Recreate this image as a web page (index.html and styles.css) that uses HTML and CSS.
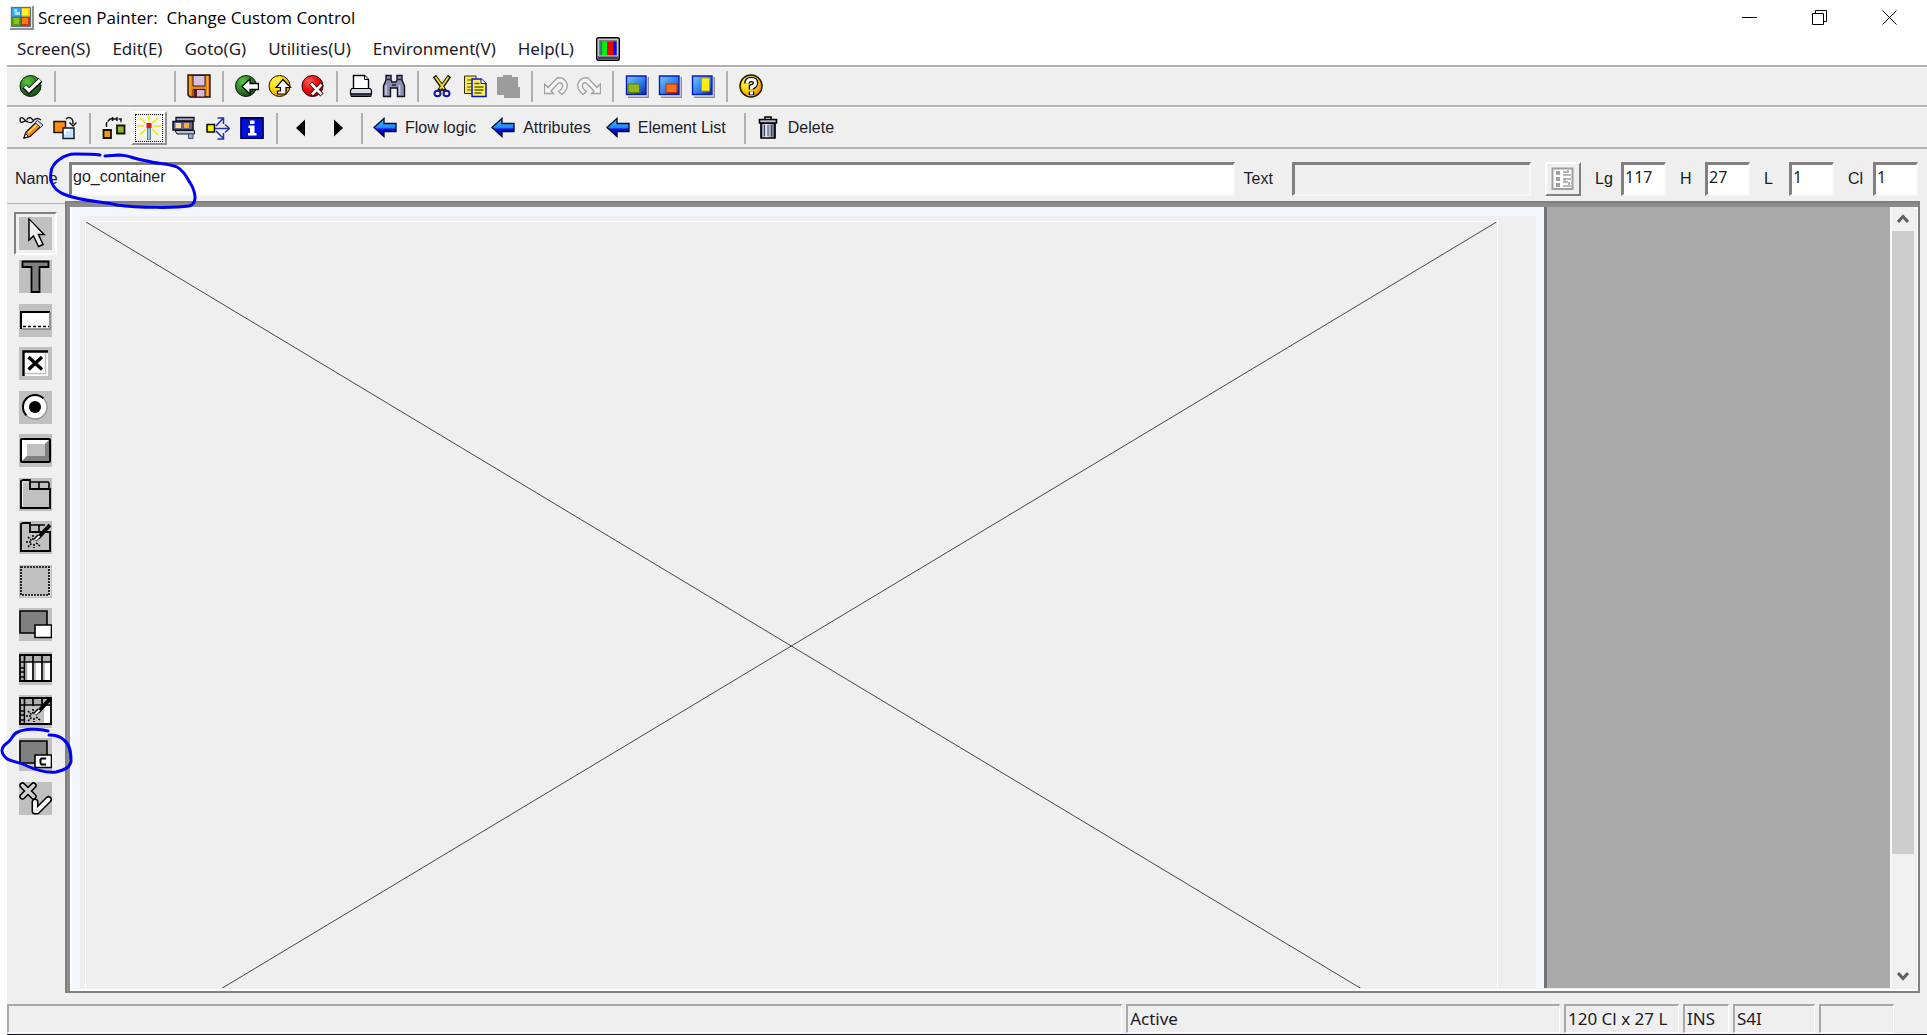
FILE: index.html
```html
<!DOCTYPE html>
<html lang="en">
<head>
  <meta charset="UTF-8">
  <meta name="viewport" content="width=device-width, initial-scale=1.0">
  <title>Screen Painter: Change Custom Control</title>
  <link rel="stylesheet" href="styles.css">
</head>
<body>
  <!-- shared gradients and shapes -->
  <svg class="defs" aria-hidden="true">
    <defs>
      <radialGradient id="gGreen" cx="0.35" cy="0.3" r="0.8"><stop offset="0" stop-color="#5cc83c"/><stop offset="0.5" stop-color="#2c8428"/><stop offset="1" stop-color="#0c4010"/></radialGradient>
      <radialGradient id="gYellow" cx="0.35" cy="0.3" r="0.8"><stop offset="0" stop-color="#fff860"/><stop offset="0.5" stop-color="#fcd800"/><stop offset="1" stop-color="#e87800"/></radialGradient>
      <radialGradient id="gRed" cx="0.35" cy="0.3" r="0.8"><stop offset="0" stop-color="#ff6050"/><stop offset="0.5" stop-color="#ec0c10"/><stop offset="1" stop-color="#8c0008"/></radialGradient>
      <linearGradient id="gBlue" x2="1" y2="1"><stop offset="0" stop-color="#78c8ff"/><stop offset="0.6" stop-color="#2878e8"/><stop offset="1" stop-color="#102878"/></linearGradient>
      <linearGradient id="gArrow" x2="0" y2="1"><stop offset="0" stop-color="#40c8ff"/><stop offset="0.5" stop-color="#2088ff"/><stop offset="0.6" stop-color="#0010e0"/><stop offset="1" stop-color="#0000a0"/></linearGradient>
      <linearGradient id="gCan" x2="1"><stop offset="0" stop-color="#707890"/><stop offset="0.4" stop-color="#e8ecf4"/><stop offset="1" stop-color="#505870"/></linearGradient>
      <symbol id="arrow" viewBox="0 0 24 24"><path d="M1 11.500 11 2.500V7.500H23V15.500H11V20.500Z" fill="url(#gArrow)"/><path d="M1 11.500 11 2.500V7.500H23V15.500H11V20.500Z" fill="none" stroke="#000830" stroke-width="1.300"/></symbol>
      <symbol id="wand" viewBox="0 0 33 33"><path d="M31 4 19 17" stroke="#000" stroke-width="4"/><path d="M20 15 16 19" stroke="#000" stroke-width="4"/><path d="M20.500 15 16.500 19" stroke="#fff" stroke-width="2"/><path d="M14 14v5M9 16l4 4M7 21h5M9 26l4-4M15 23v4M17 22l4 3" stroke="#000" stroke-width="1.500" stroke-dasharray="2 1" fill="none"/></symbol>
    </defs>
  </svg>

  <header class="titlebar">
    <svg class="app-icon" viewBox="0 0 24 24">
      <path d="M0 0H24V24H0Z" fill="#909090"/><path d="M0 0H22V22H0Z" fill="#e4e4e4"/>
      <path d="M2 2H11V11H2Z" fill="#38a8f8"/><path d="M4 3h3v3h3v3H5Z" fill="#a8e0ff"/>
      <path d="M11 2H20V11H11Z" fill="#f8d000"/><path d="M12 3h6v6h-6Z" fill="#fff030"/>
      <path d="M2 11H11V20H2Z" fill="#50a010"/><path d="M4 12h5v6H4Z" fill="#88c420"/>
      <path d="M11 11H20V20H11Z" fill="#d03800"/><path d="M12 12h6v6h-6Z" fill="#ff7810"/>
      <path d="M1.500 1.500H20.500V20.500H1.500ZM11 2V20M2 11H20" fill="none" stroke="#405068" stroke-width=".8"/>
    </svg>
    <h1>Screen Painter:&nbsp; Change Custom Control</h1>
    <div class="window-buttons">
      <button type="button" aria-label="Minimize"><svg viewBox="0 0 16 16"><path d="M0 7.500H15" class="thin"/></svg></button>
      <button type="button" aria-label="Restore"><svg viewBox="0 0 16 16"><path d="M.5 3.500H11.500V14.500H.5ZM3.500 3.500V.5H14.500V11.500H11.500" class="thin"/></svg></button>
      <button type="button" aria-label="Close"><svg viewBox="0 0 16 16"><path d="M.5.5 14.500 14.500M14.500.5.5 14.500" class="thin"/></svg></button>
    </div>
  </header>

  <div class="window">
    <nav class="menubar">
      <button type="button">Screen(S)</button>
      <button type="button">Edit(E)</button>
      <button type="button">Goto(G)</button>
      <button type="button">Utilities(U)</button>
      <button type="button">Environment(V)</button>
      <button type="button">Help(L)</button>
      <button type="button" aria-label="Layout">
        <svg class="icon" viewBox="0 0 24 24"><rect x=".7" y=".7" width="22.600" height="22.600" rx="1.500" fill="#c8c8d0" stroke="#000" stroke-width="1.400"/><path d="M1.500 19.500H22.500V22H1.500Z" fill="#404058"/><path d="M3 3H21V18.500H3Z" fill="#807c80"/><path d="M4.500 4.500H6V18H4.500Z" fill="#008080"/><path d="M6 4.500h5V18H6Z" fill="#00f000"/><path d="M11 4.500h6V18h-6Z" fill="#f80000"/><path d="M17 4.500h3.500V18H17Z" fill="#0000f8"/></svg>
      </button>
    </nav>

    <div class="toolbar">
      <button type="button" aria-label="Enter"><svg class="icon" viewBox="0 0 24 24"><circle cx="11.500" cy="12" r="10.500" fill="url(#gGreen)" stroke="#102010"/><path d="M5.500 12.500 10 17 21.500 6" fill="none" stroke="#000" stroke-width="5.500"/><path d="M6 12.500 10 16.500 21 6" fill="none" stroke="#fff" stroke-width="3.200"/></svg></button>
      <span class="sep"></span>
      <input class="command" type="text" aria-label="Command">
      <span class="sep"></span>
      <button type="button" aria-label="Save"><svg class="icon" viewBox="0 0 24 24"><path d="M1 1H23V23H3L1 21Z" fill="#e88810" stroke="#201008" stroke-width="1.400"/><path d="M3 2v18M20.500 2v20" stroke="#ffb040"/><path d="M6 1.500H18V12H6Z" fill="#d8c0e0" stroke="#301828"/><path d="M6 15.500H18V23H6Z" fill="#d0b8d8" stroke="#301010"/><path d="M7 16h3v7H7Z" fill="#601810"/></svg></button>
      <span class="sep"></span>
      <button type="button" aria-label="Back"><svg class="icon" viewBox="0 0 24 24"><circle cx="11" cy="12" r="10.500" fill="url(#gGreen)" stroke="#102010"/><path d="M7 12.500 15 5V9.500H23.500V15.500H15V20Z" fill="#fff" stroke="#000" stroke-width="1.300"/></svg></button>
      <button type="button" aria-label="Exit"><svg class="icon" viewBox="0 0 24 24"><circle cx="11.500" cy="12" r="10.500" fill="url(#gYellow)" stroke="#201800"/><path d="M15 5.500 22.500 13.500H18V20H9.500V17H12.500V13.500H8Z" fill="#fff" stroke="#000" stroke-width="1.200"/></svg></button>
      <button type="button" aria-label="Cancel"><svg class="icon" viewBox="0 0 24 24"><circle cx="11.500" cy="12" r="10.500" fill="url(#gRed)" stroke="#300"/><path d="M9.500 9 21 21M21 10 10.500 21" stroke="#400" stroke-width="4.500"/><path d="M10 9.500 20.500 20.500M20.500 10.500 11 20.500" stroke="#fff" stroke-width="2.600"/></svg></button>
      <span class="sep"></span>
      <button type="button" aria-label="Print"><svg class="icon" viewBox="0 0 24 24"><path d="M4.500 15V1.500H15.500L19.500 5.500V15Z" fill="#fff" stroke="#000" stroke-width="1.400"/><path d="M15.500 1.500V5.500H19.500" fill="#ddd" stroke="#000"/><path d="M3 14.500H21L22.500 16.500V20H1.500V16.500Z" fill="#d8dce8" stroke="#000" stroke-width="1.200"/><path d="M2 20H22V22.500H2Z" fill="#485068" stroke="#000"/></svg></button>
      <button type="button" aria-label="Find"><svg class="icon" viewBox="0 0 24 24"><path d="M1.500 22.500V12L4 6V1.500H9V6L10 8H14L15 6V1.500H20V6L22.500 12V22.500H15.500V14H8.500V22.500Z" fill="#8c90b0" stroke="#101020" stroke-width="1.400"/><path d="M4 11V21M17.500 11V21" stroke="#c8cce0" stroke-width="1.600"/><path d="M4.500 5.500H8.500M15.500 5.500H19.500M10 11H14" stroke="#202440" stroke-width="1.400"/></svg></button>
      <span class="sep"></span>
      <button type="button" aria-label="Cut"><svg class="icon" viewBox="0 0 24 24"><path d="M4.500 2 15 17M19.500 2 9 17" stroke="#181800" stroke-width="4"/><path d="M5.500 3 14 15M18.500 3 10 15" stroke="#f0e020" stroke-width="1.800"/><ellipse cx="7.500" cy="19.500" rx="3" ry="2.800" fill="none" stroke="#1818a0" stroke-width="2"/><ellipse cx="16.500" cy="19.500" rx="3" ry="2.800" fill="none" stroke="#1818a0" stroke-width="2"/></svg></button>
      <button type="button" aria-label="Copy"><svg class="icon" viewBox="0 0 24 24"><path d="M1.500 2H13V19.500H1.500Z" fill="#f4e860" stroke="#303010"/><path d="M4 6h7M4 9.500h5M4 13h4M4 16h4" stroke="#605800"/><path d="M9 5H18L23 9.500V22.500H9Z" fill="#f8f060" stroke="#1010c0" stroke-width="1.500"/><path d="M18 5V9.500H23" fill="#fff" stroke="#1010c0"/><path d="M11.500 9.500h5M11.500 13h9M11.500 16h9M11.500 19h7" stroke="#686000" stroke-width="1.300"/></svg></button>
      <button type="button" aria-label="Paste" disabled><svg class="icon" viewBox="0 0 24 24"><path d="M1 3H7V1H16V3H22V13H24V24H8V21H1Z" fill="#9c9c9c"/></svg></button>
      <span class="sep"></span>
      <button type="button" aria-label="Undo" disabled><svg class="icon" viewBox="0 0 24 24"><path d="M0.500 10V19.500H9.500L7 17 14 9.500Q17 7.500 18.500 10.500 19.500 14 14.500 17.500L18 20.500Q24.500 15 23 9.500 20 2.500 13 4L4 13.500Z" fill="#f4f4f4" stroke="#a0a0a0" stroke-width="1.300"/></svg></button>
      <button type="button" aria-label="Redo" disabled><svg class="icon" viewBox="0 0 24 24"><path d="M23.500 10V19.500H14.500L17 17 10 9.500Q7 7.500 5.500 10.500 4.500 14 9.500 17.500L6 20.500Q-.5 15 1 9.500 4 2.500 11 4L20 13.500Z" fill="#f4f4f4" stroke="#a0a0a0" stroke-width="1.300"/></svg></button>
      <span class="sep"></span>
      <button type="button" aria-label="Create session"><svg class="icon" viewBox="0 0 24 24"><path d="M3 3H24V24H3Z" fill="#909090"/><path d="M0 0H22.500V22.500H0Z" fill="#f4f4f4"/><path d="M1.500 2H21V20.500H1.500Z" fill="url(#gBlue)" stroke="#0818c0" stroke-width="1.400"/><path d="M3 10H14.500V18.500H3Z" fill="#90b818" stroke="#587808"/></svg></button>
      <button type="button" aria-label="Generate shortcut"><svg class="icon" viewBox="0 0 24 24"><path d="M3 3H24V24H3Z" fill="#909090"/><path d="M0 0H22.500V22.500H0Z" fill="#f4f4f4"/><path d="M1.500 2H21V20.500H1.500Z" fill="url(#gBlue)" stroke="#0818c0" stroke-width="1.400"/><path d="M8 10H19V18.500H8Z" fill="#ff7010" stroke="#a83000"/></svg></button>
      <button type="button" aria-label="Layout menu"><svg class="icon" viewBox="0 0 24 24"><path d="M3 3H24V24H3Z" fill="#909090"/><path d="M0 0H22.500V22.500H0Z" fill="#f4f4f4"/><path d="M1.500 2H21V20.500H1.500Z" fill="url(#gBlue)" stroke="#0818c0" stroke-width="1.400"/><path d="M10.500 4H18.500V17H10.500Z" fill="#ffec10" stroke="#c0a000"/></svg></button>
      <span class="sep"></span>
      <button type="button" aria-label="Help"><svg class="icon" viewBox="0 0 24 24"><circle cx="12" cy="12" r="11" fill="url(#gYellow)" stroke="#201800" stroke-width="1.500"/><path d="M8 9.500Q8 5.500 12 5.500 16.500 5.500 16.500 9 16.500 12 12.500 13V15.500M12.500 17.500V21" fill="none" stroke="#000" stroke-width="5.500"/><path d="M8 9.500Q8 5.500 12 5.500 16.500 5.500 16.500 9 16.500 12 12.500 13V15.500M12.500 17.500V20.500" fill="none" stroke="#fff" stroke-width="3"/></svg></button>
    </div>

    <div class="toolbar toolbar-app">
      <button type="button" aria-label="Display or change"><svg class="icon" viewBox="0 0 24 24"><path d="M1 4Q1 1 4 2L7 5M8 4Q8 1 12 2L15 5M1 4Q1 7 4 6 7 4 9 6 13 8 15 4Q18 1 22 4" fill="none" stroke="#101010" stroke-width="1.300"/><path d="M5 22 7 16 18 5.500 23 9.500 11 20.500Z" fill="#f88c10" stroke="#201000" stroke-width="1.300"/><path d="M9 17 19.500 7" stroke="#ffe060" stroke-width="1.500"/><path d="M16 6.500 21.500 11.500 24 9 18.500 4.500Z" fill="#c8d4e8" stroke="#203050"/><path d="M5 22 6.500 17.500 9.500 20.500Z" fill="#fff" stroke="#000"/></svg></button>
      <button type="button" aria-label="Other object"><svg class="icon" viewBox="0 0 24 24"><path d="M1 5.500H12.500V16.500H1Z" fill="#ff8c10" stroke="#201000" stroke-width="1.500"/><path d="M10 12H21V22.500H10Z" fill="#c8e0f8" stroke="#102030" stroke-width="1.500"/><path d="M12 18V14H17" stroke="#fff" fill="none" stroke-width="2"/><path d="M13 3Q16 0 19 3 20 4 20 8M16.500 6.500 20 10 23.500 6.500" fill="none" stroke="#181818" stroke-width="1.500"/></svg></button>
      <span class="sep"></span>
      <button type="button" aria-label="Check"><svg class="icon" viewBox="0 0 24 24"><path d="M1.500 14H9V22H1.500Z" fill="#f09810" stroke="#181000" stroke-width="1.800"/><path d="M15 9.500H22.500V17.500H15Z" fill="#90b830" stroke="#101800" stroke-width="1.800"/><path d="M4.500 11V7L8 3H19V7M10.500 1V5M15 1V5" fill="none" stroke="#101010" stroke-width="1.500" stroke-dasharray="5 1"/></svg></button>
      <button type="button" class="raised" aria-label="Activate"><svg class="icon" viewBox="0 0 24 24"><path d="M12 0V5M3 2 8.500 7M21 2 15.500 7M0 10H7M24 10H17M3 19 9 13M21 19 15 13" stroke="#f0e800" stroke-width="1.500"/><path d="M9.500 7H14.500V12H9.500Z" fill="#f01010"/><path d="M10.500 12H13.500V24H10.500Z" fill="#a0c8d8" stroke="#406878" stroke-width=".8"/></svg></button>
      <button type="button" aria-label="Test"><svg class="icon" viewBox="0 0 24 24"><path d="M4 1.500H22V5H4Z" fill="#a0a8c0" stroke="#101020" stroke-width="1.300"/><path d="M1 5.500H21V14H1Z" fill="#606880" stroke="#101020" stroke-width="1.500"/><path d="M3.500 7H9V12H3.500Z" fill="#ffd8a8"/><path d="M12 7H17V12H12Z" fill="#f8a840"/><path d="M3 14.500H22.500V18H5Z" fill="#b8c0d0" stroke="#101020"/><path d="M16.500 18H21V22.500H16.500Z" fill="#a0b0d0" stroke="#405070"/></svg></button>
      <button type="button" aria-label="Where-used list"><svg class="icon" viewBox="0 0 24 24"><path d="M1 8.500H8.500V16H1Z" fill="#f8f000" stroke="#000" stroke-width="1.500"/><path d="M9 12.500H23M19 8.500 23.500 12.500 19 16.500M10 10 17 2.500M11.500 2H17.500V8M10 15 17 22M11.500 23H17.500V17" fill="none" stroke="#2030b0" stroke-width="1.500"/></svg></button>
      <button type="button" aria-label="Information"><svg class="icon" viewBox="0 0 24 24"><path d="M1 2H23V22H1Z" fill="#0010d8" stroke="#000070" stroke-width="1.800"/><path d="M10 4.500H14.500V8H10ZM8.500 9.500H14.500V17H16.500V19.500H8V17H10V12H8.500Z" fill="#fff"/></svg></button>
      <span class="sep"></span>
      <button type="button" class="step" aria-label="Previous"><svg class="icon" viewBox="0 0 24 24"><path d="M6 12 15 3.500V20.500Z" fill="#000"/></svg></button>
      <button type="button" class="step" aria-label="Next"><svg class="icon" viewBox="0 0 24 24"><path d="M18 12 9 3.500V20.500Z" fill="#000"/></svg></button>
      <span class="sep"></span>
      <button type="button" class="labelled"><svg class="icon"><use href="#arrow"/></svg>Flow logic</button>
      <button type="button" class="labelled"><svg class="icon"><use href="#arrow"/></svg>Attributes</button>
      <button type="button" class="labelled"><svg class="icon"><use href="#arrow"/></svg>Element List</button>
      <span class="sep"></span>
      <button type="button" class="labelled"><svg class="icon" viewBox="0 0 24 24"><path d="M5 7H19V22H5Z" fill="url(#gCan)" stroke="#000" stroke-width="1.700"/><path d="M3.500 3.500H20.500V7H3.500Z" fill="#b8bcc8" stroke="#000" stroke-width="1.600"/><path d="M9 3V1H15V3" fill="none" stroke="#000" stroke-width="1.500"/><path d="M8.500 9V20M12 9V20M15.500 9V20" stroke="#404860"/></svg>Delete</button>
    </div>

    <form class="fields">
      <label for="name" class="name-label">Name</label>
      <input type="text" id="name" class="sunken name-input" value="go_container" spellcheck="false">
      <label for="text" class="text-label">Text</label>
      <input type="text" id="text" class="sunken text-input" disabled>
      <button type="button" class="attr-button" aria-label="Attributes list">
        <svg viewBox="0 0 24 24"><path d="M1.500 1.500H21.500V22H1.500Z" fill="#fff" stroke="#a0a0a0" stroke-width="2"/><path d="M5 4H9V8H5ZM5 10H9V14H5ZM5 16H9V20H5Z" fill="#a0a0a0"/><path d="M12 5h4M12 8h8M12 12h8M12 15h5M12 19h8M17 3v3M14 11v3M18 15v3" stroke="#a0a0a0" stroke-width="1.500"/></svg>
      </button>
      <div class="sizes">
        <label for="lg">Lg</label><input type="text" id="lg" class="sunken" value="117">
        <label for="h">H</label><input type="text" id="h" class="sunken" value="27">
        <label for="l">L</label><input type="text" id="l" class="sunken" value="1">
        <label for="cl">Cl</label><input type="text" id="cl" class="sunken" value="1">
      </div>
    </form>

    <main class="workspace">
      <aside class="palette">
        <button type="button" class="pressed" aria-label="Select"><svg viewBox="0 0 33 33"><path d="M10 2V23L14.500 19 19.500 29.500 24 27.500 19.500 17.500H25Z" fill="#eee" stroke="#000" stroke-width="1.500"/><path d="M11 4.500 22.500 16.500" stroke="#fff"/></svg></button>
        <button type="button" aria-label="Text field"><svg viewBox="0 0 33 33"><path d="M3.500 1.500H29.500V7H20.500V32H12.500V7H3.500Z" fill="#808080" stroke="#000" stroke-width="1.800"/></svg></button>
        <button type="button" aria-label="Input field"><svg viewBox="0 0 33 33"><path d="M2 8H31V25H2Z" fill="#fff"/><path d="M2 25V8H31" fill="none" stroke="#000" stroke-width="2"/><path d="M31 8V25H3" fill="none" stroke="#808080" stroke-width="1.500"/><path d="M4 22.500H30" stroke="#000" stroke-width="1.600" stroke-dasharray="3 2"/></svg></button>
        <button type="button" aria-label="Checkbox"><svg viewBox="0 0 33 33"><path d="M4 4H29V29H4Z" fill="#fff"/><path d="M4.500 29V4.500H29" fill="none" stroke="#000" stroke-width="2.400"/><path d="M26.500 6V26.500H6" fill="none" stroke="#c0c0c0" stroke-width="1.500"/><path d="M9.500 10 23 22.500M23 10 9.500 22.500" stroke="#000" stroke-width="3.400"/></svg></button>
        <button type="button" aria-label="Radio button"><svg viewBox="0 0 33 33"><circle cx="16" cy="16" r="12" fill="#fff"/><path d="M7.500 24.500A12 12 0 1 1 24.500 7.500" fill="none" stroke="#000" stroke-width="2"/><path d="M24.500 7.500A12 12 0 0 1 7.500 24.500" fill="none" stroke="#909090" stroke-width="1.300"/><circle cx="16" cy="16" r="6" fill="#000"/></svg></button>
        <button type="button" aria-label="Pushbutton"><svg viewBox="0 0 33 33"><rect x="2" y="5" width="29" height="23" rx="1" fill="#c0c0c0" stroke="#000" stroke-width="2"/><path d="M3 27V6H30L26 10H8V22Z" fill="#fff"/><path d="M3 27H30V6L26 10V22H8Z" fill="#808080"/></svg></button>
        <button type="button" aria-label="Tabstrip"><svg viewBox="0 0 33 33"><path d="M2 30V3L4 2H11V11H31V30Z" fill="#c0c0c0" stroke="#000" stroke-width="1.800"/><path d="M11 4H20V11M20 5L21 4H29L30 5V11" fill="none" stroke="#000" stroke-width="1.600"/><path d="M3.500 28V4H9" fill="none" stroke="#eee"/></svg></button>
        <button type="button" aria-label="Tabstrip wizard"><svg viewBox="0 0 33 33"><path d="M2 30V3L4 2H11V11H31V30Z" fill="#c0c0c0" stroke="#000" stroke-width="1.800"/><path d="M11 4H20V11M20 5L21 4H26" fill="none" stroke="#000" stroke-width="1.600"/><use href="#wand"/></svg></button>
        <button type="button" aria-label="Box"><svg viewBox="0 0 33 33"><path d="M3 3H31V31H3Z" fill="none" stroke="#eee"/><path d="M2 2H30V30H2Z" fill="#c0c0c0" stroke="#000" stroke-width="1.600" stroke-dasharray="2 1"/></svg></button>
        <button type="button" aria-label="Subscreen area"><svg viewBox="0 0 33 33"><path d="M1 3H28V25H1Z" fill="#808080" stroke="#000" stroke-width="1.600"/><path d="M16 17H32.500V29.500H16Z" fill="#fff" stroke="#000" stroke-width="1.600"/></svg></button>
        <button type="button" aria-label="Table control"><svg viewBox="0 0 33 33"><path d="M1 3H32V29H1Z" fill="#fff" stroke="#000" stroke-width="1.800"/><path d="M2 4H31V10H2ZM2 4H5V28H2Z" fill="#b0b0b0"/><path d="M1 10H32M5.500 3V29M14 3V29M23 3V29M1 16H5M1 20H5M1 25H5" stroke="#000" stroke-width="1.700"/><path d="M7.500 11V28M16 11V28M25 11V28" stroke="#a0a0a0" stroke-width="1.400"/></svg></button>
        <button type="button" aria-label="Table control wizard"><svg viewBox="0 0 33 33"><path d="M1 3H32V29H1Z" fill="#fff" stroke="#000" stroke-width="1.800"/><path d="M2 4H31V10H2ZM2 4H5V28H2Z" fill="#b0b0b0"/><path d="M1 10H32M5.500 3V29M14 3V29M23 3V29M1 16H5M1 20H5M1 25H5" stroke="#000" stroke-width="1.700"/><path d="M7 11H25V28H7Z" fill="#c0c0c0"/><use href="#wand"/></svg></button>
        <button type="button" aria-label="Custom control"><svg viewBox="0 0 33 33"><path d="M1 3H28V25H1Z" fill="#808080" stroke="#000" stroke-width="1.600"/><path d="M16 17H32.500V29.500H16Z" fill="#fff" stroke="#000" stroke-width="1.600"/><path d="M27 20.500H22.500L21.500 21.500V25L22.500 26.500H27" fill="none" stroke="#000" stroke-width="2"/></svg></button>
        <button type="button" aria-label="Status icon"><svg viewBox="0 0 33 33"><path d="M3.500 3.500 14.500 14.500M14.500 3.500 3.500 14.500" stroke="#000" stroke-width="6.500" stroke-linecap="round"/><path d="M3.500 3.500 14.500 14.500M14.500 3.500 3.500 14.500" stroke="#d0d0d0" stroke-width="3.500" stroke-linecap="round"/><path d="M16 20V29H18L29.500 17.500" fill="none" stroke="#000" stroke-width="7" stroke-linecap="round" stroke-linejoin="round"/><path d="M16 20V29H18L29.500 17.500" fill="none" stroke="#f4f4f4" stroke-width="4" stroke-linecap="round" stroke-linejoin="round"/></svg></button>
      </aside>

      <section class="editor">
        <div class="canvas">
          <div class="screen">
            <!-- custom control runs on below the visible area -->
            <div class="custom-control">
              <svg viewBox="0 0 100 100" preserveAspectRatio="none"><path d="M0 0 100 100M100 0 0 100"/></svg>
            </div>
          </div>
        </div>
        <div class="outside"></div>
        <div class="scrollbar">
          <button type="button" aria-label="Scroll up"><svg viewBox="0 0 12 10"><path d="M1 8 6 2.500 11 8"/></svg></button>
          <div class="track"><div class="thumb"></div></div>
          <button type="button" aria-label="Scroll down"><svg viewBox="0 0 12 10"><path d="M1 2 6 7.500 11 2"/></svg></button>
        </div>
      </section>
    </main>

    <footer class="statusbar">
      <span class="cell message"></span>
      <span class="cell state">Active</span>
      <span class="cell size">120 Cl x 27 L</span>
      <span class="cell mode">INS</span>
      <span class="cell system">S4I</span>
      <span class="cell last"></span>
    </footer>
  </div>

  <!-- pen marks -->
  <svg class="mark mark-name" viewBox="0 0 160 64"><path d="M53 5C46 4 38 4 28 4 18 4 5 12 4 22 2 33 8 41 19 45 34 51 52 51 70 55 92 58 130 58 142 56 150 54 149 45 145 36 139 26 136 20 130 17 122 13 110 14 100 11 86 9 82 5 72 5L58 6"/></svg>
  <svg class="mark mark-control" viewBox="0 0 76 50"><path d="M48 5C38 2 24 3 18 6 12 8 13 13 7 17 0 22 1 27 6 32 11 36 20 36 27 40 36 44 48 47 56 46 64 44 70 42 71 35 71 26 70 19 64 14 60 10 55 9 49 9"/></svg>
</body>
</html>
```

FILE: styles.css
```css
* {
  box-sizing: border-box;
}
body {
  margin: 0;
  height: 100vh;
  display: flex;
  flex-direction: column;
  overflow: hidden;
  position: relative;
  background: #fff;
  color: #1c1c28;
  font-family: "Liberation Sans", Arial, sans-serif;
  font-size: 16px;
}
button {
  padding: 0;
  border: 0;
  background: none;
  color: inherit;
  font: inherit;
}
button svg {
  display: block;
  flex: none;
}
.defs {
  position: absolute;
  width: 0;
  height: 0;
}
.icon {
  width: 24px;
  height: 24px;
}

/* title bar */
.titlebar {
  flex: none;
  display: flex;
  align-items: center;
  height: 35px;
  padding: 0 2px 0 10px;
}
.app-icon {
  width: 24px;
  height: 24px;
}
.titlebar h1 {
  flex: 1;
  margin: 0 0 0 4px;
  font: 17px "Open Sans", "Noto Sans", sans-serif;
  color: #000;
}
.window-buttons {
  display: flex;
}
.window-buttons button {
  width: 70px;
  height: 34px;
  display: flex;
  align-items: center;
  justify-content: center;
}
.window-buttons svg {
  width: 16px;
  height: 16px;
}
.thin {
  fill: none;
  stroke: #000;
}

.window {
  flex: 1;
  min-height: 0;
  display: flex;
  flex-direction: column;
  margin-left: 7px;
  background: #efefef;
  border-bottom: 1px solid #1c1828;
}

/* menu */
.menubar {
  flex: none;
  display: flex;
  align-items: center;
  gap: 22px;
  height: 32px;
  padding: 0 10px 3px;
  background: #fff;
  border-bottom: 2px solid #b0b0b0;
  font: 17px "Noto Sans", sans-serif;
}

/* toolbars */
.toolbar {
  flex: none;
  display: flex;
  align-items: center;
  height: 40px;
  padding-left: 7px;
  border-bottom: 2px solid #b4b4b4;
  box-shadow: inset 0 1px #fcfcfc;
}
.toolbar button {
  width: 33px;
  height: 34px;
  display: flex;
  align-items: center;
  justify-content: center;
}
.sep {
  width: 2px;
  height: 31px;
  margin: 0 6px 0 7px;
  background: #b0b0b0;
}
.command {
  width: 105px;
  height: 26px;
  border: 0;
  background: transparent;
}
.toolbar-app {
  height: 42px;
  padding-top: 2px;
}
.toolbar-app button {
  width: 34px;
}
.toolbar-app .step {
  width: 35px;
}
.toolbar-app .raised {
  width: 36px;
  padding: 1px;
  background: #f4f4f4;
  border: 2px solid;
  border-color: #fff #909090 #909090 #fff;
}
.raised .icon {
  outline: 1px dotted #000;
  outline-offset: 1px;
}
.toolbar-app .labelled {
  width: auto;
  gap: 8px;
  padding: 0 11px 0 4px;
}

/* attribute fields */
.fields {
  flex: none;
  display: flex;
  align-items: center;
  height: 52px;
  padding: 8px 9px 0 8px;
}
.sunken {
  height: 34px;
  padding: 0 2px 5px 1px;
  border: 2px solid;
  border-width: 3px 2px 2px 3px;
  border-color: #808080 #f8f8f8 #f8f8f8 #808080;
  background: #fff;
  color: #1c1c28;
  font: 16px "Liberation Sans", Arial, sans-serif;
}
.sunken:disabled {
  background: #efefef;
}
.name-label {
  width: 54px;
}
.name-input {
  flex: 5;
  min-width: 0;
}
.text-label {
  width: 57px;
  padding-left: 9px;
}
.text-input {
  flex: 1;
  min-width: 0;
}
.attr-button {
  width: 36px;
  height: 34px;
  margin: 0 14px;
  display: flex;
  align-items: center;
  justify-content: center;
  border: 2px solid;
  border-color: #fff #808080 #808080 #fff;
}
.attr-button svg {
  width: 24px;
  height: 24px;
}
.sizes {
  display: flex;
  align-items: center;
}
.sizes label {
  width: 39px;
  padding-left: 14px;
}
.sizes label:first-child {
  width: 26px;
  padding-left: 0;
}
.sizes .sunken {
  width: 45px;
  font-family: "Noto Sans", sans-serif;
}

/* workspace */
.workspace {
  flex: 1;
  min-height: 0;
  display: flex;
  padding-right: 7px;
}
.palette {
  flex: none;
  width: 58px;
  height: 619px;
  margin-top: 2px;
  padding: 8px 7px 2px;
  display: flex;
  flex-direction: column;
  justify-content: space-between;
  border-top: 1px solid #b0b0b0;
}
.palette button {
  width: 43px;
  height: 43px;
  padding: 3px;
  border: 2px solid transparent;
}
.palette .pressed {
  border-color: #808080 #fff #fff #808080;
}
.palette svg {
  width: 33px;
  height: 33px;
  background: #c0c0c0;
}
.editor {
  flex: 1;
  min-width: 0;
  display: flex;
  padding: 4px 4px 3px 5px;
  border: 2px solid #808080;
  box-shadow: inset 3px 4px #8c8c8c, inset 5px 6px #fff, inset -1px -2px #fff;
}
.canvas {
  flex: 1474;
  min-width: 0;
  overflow: hidden;
  background: #f3f6fc;
  border-right: 3px solid #747474;
}
.screen {
  margin: 9px 8px 0;
  padding: 5px 38px 0 5px;
  background: #efefef;
}
.custom-control {
  height: 850px;
  border: 1px solid #fff;
}
.custom-control svg {
  display: block;
  width: 100%;
  height: 100%;
}
.custom-control path {
  fill: none;
  stroke: #484848;
  stroke-width: 1px;
  vector-effect: non-scaling-stroke;
}
.outside {
  flex: 344;
  background: #aaa;
}
.scrollbar {
  flex: none;
  width: 24px;
  display: flex;
  flex-direction: column;
  background: #f0f0f0;
  border-left: 2px solid #f8f8f8;
}
.scrollbar button {
  height: 24px;
  display: flex;
  align-items: center;
  justify-content: center;
}
.scrollbar svg {
  width: 12px;
  height: 10px;
  fill: none;
  stroke: #606060;
  stroke-width: 3px;
}
.track {
  flex: 1;
}
.thumb {
  height: 85%;
  background: #cdcdcd;
}

/* status bar */
.statusbar {
  flex: none;
  display: flex;
  gap: 4px;
  height: 30px;
  margin: 11px 33px 0 0;
  font: 17px "Noto Sans", sans-serif;
}
.cell {
  height: 29px;
  padding-left: 2px;
  border: 2px solid;
  border-width: 2px 1px 1px 2px;
  border-color: #a8a8a8 #fff #fff #a8a8a8;
  line-height: 26px;
  white-space: nowrap;
}
.message {
  flex: 1121;
}
.state {
  flex: 433;
}
.size {
  width: 115px;
}
.mode {
  width: 46px;
}
.system {
  width: 82px;
}
.last {
  width: 75px;
}

/* pen marks lie over the window */
.mark {
  position: absolute;
  fill: none;
  stroke: #0000f8;
  stroke-width: 3px;
  stroke-linecap: round;
  stroke-linejoin: round;
  pointer-events: none;
}
.mark-name {
  left: 47px;
  top: 150px;
  width: 160px;
  height: 64px;
}
.mark-control {
  left: 0;
  top: 726px;
  width: 76px;
  height: 50px;
}
```
